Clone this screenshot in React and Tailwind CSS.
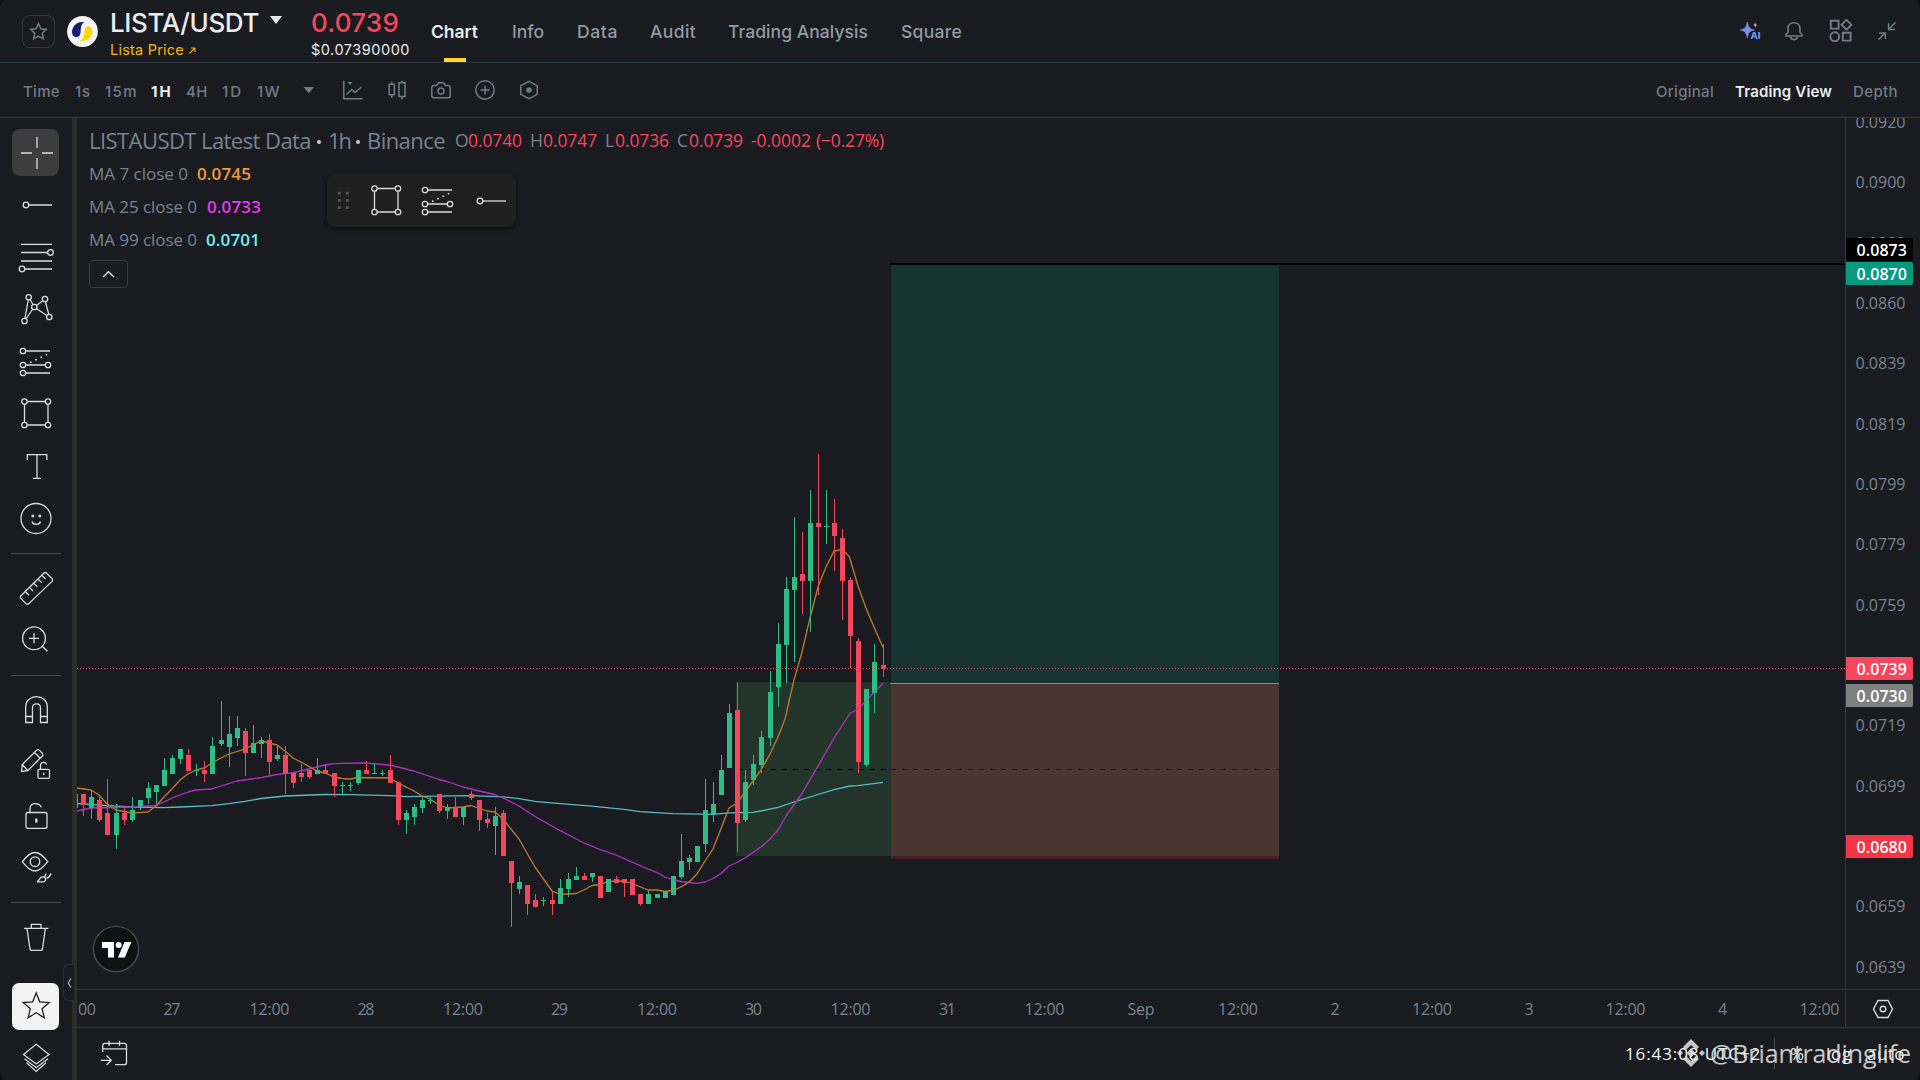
import React, { useLayoutEffect, useRef } from "react";

// Spreads a label's letters so that it fills the width given by its class.
function Fit({ className = "", children }) {
  const box = useRef(null);
  const ink = useRef(null);
  useLayoutEffect(() => {
    const el = ink.current;
    el.style.letterSpacing = "0px";
    const n = el.textContent.length;
    const gap = (box.current.clientWidth - el.getBoundingClientRect().width) / n;
    el.style.letterSpacing = gap.toFixed(3) + "px";
  }, [children]);
  return (
    <span ref={box} className={"block shrink-0 whitespace-nowrap " + className}>
      <span ref={ink}>{children}</span>
    </span>
  );
}

// [x, high, low, bodyTop, bodyBottom, rising]
const CANDLES = [
  [75,794,808,794,808,1],[83,794,816,794,805,0],[91,791,819,797,808,1],[99,797,822,800,820,0],
  [107,779,835,813,835,0],[116,804,849,813,835,1],[124,807,825,813,820,0],[132,797,822,810,820,1],
  [140,800,810,800,808,1],[148,782,804,788,798,1],[156,785,804,785,792,1],[164,758,786,770,786,1],
  [172,755,774,758,774,1],[180,749,764,749,759,1],[188,749,771,755,771,0],[196,764,776,770,771,1],
  [204,761,782,770,774,0],[212,737,774,746,774,1],[221,701,746,740,744,1],[229,716,767,734,747,1],
  [237,716,746,728,738,1],[245,728,776,731,753,0],[253,725,753,743,753,1],[261,737,758,740,744,1],
  [269,734,776,740,762,0],[277,746,761,755,759,1],[285,746,794,755,774,0],[293,773,788,773,783,0],
  [301,764,782,773,777,0],[309,770,779,770,777,0],[317,758,774,770,774,1],[325,764,774,770,774,0],
  [334,773,797,773,786,0],[342,782,794,785,786,1],[350,782,791,785,786,1],[358,770,785,770,783,1],
  [366,761,774,770,774,0],[374,764,774,773,774,1],[382,770,776,773,774,1],[390,755,783,770,783,0],
  [398,782,825,782,820,0],[406,810,834,813,820,1],[414,804,825,807,817,1],[422,797,813,800,808,1],
  [430,797,804,800,801,1],[439,794,813,794,811,0],[447,804,819,807,811,1],[455,797,817,807,817,0],
  [463,807,825,807,817,1],[471,791,800,794,798,0],[479,800,831,800,820,0],[487,813,828,819,823,0],
  [495,807,855,816,826,1],[503,810,856,813,856,0],[511,861,927,861,883,0],[519,876,894,882,889,1],
  [527,885,915,885,904,0],[535,894,907,900,907,0],[543,897,906,900,901,1],[552,891,915,900,904,0],
  [560,879,904,888,904,1],[568,873,897,879,889,1],[576,867,880,876,880,1],[584,873,880,876,880,0],
  [592,873,882,873,877,1],[600,876,898,876,898,0],[608,879,892,879,892,1],[616,876,883,879,883,0],
  [624,879,897,879,883,0],[632,879,895,879,895,0],[640,894,906,894,904,0],[648,891,904,894,904,1],
  [657,894,898,894,898,1],[665,891,898,891,898,1],[673,876,895,876,895,1],[681,834,879,861,877,1],
  [689,855,870,858,862,1],[697,846,862,846,862,1],[705,779,852,810,844,1],[713,782,822,804,814,1],
  [721,755,795,770,795,1],[729,704,768,713,768,1],[737,683,852,710,823,0],[745,770,822,782,820,1],
  [753,755,785,764,780,1],[761,731,773,737,765,1],[770,671,746,692,738,1],[778,623,707,644,687,1],
  [786,577,683,589,645,1],[794,517,662,577,590,1],[802,532,614,574,581,0],[810,490,632,523,581,1],
  [818,454,595,523,527,0],[826,490,544,526,527,1],[834,499,571,523,536,0],[842,529,620,538,581,0],
  [850,577,668,580,636,0],[858,638,773,641,762,0],[866,689,767,689,765,1],[874,644,713,662,693,1],
  [883,644,677,665,669,0],
];

const MA7 =
  "77,788 91,790 99,795 107,804 116,810 132,813 148,812 156,806 164,797 172,789 180,780 188,774 196,770 204,768 212,763 221,758 229,754 245,749 261,741 277,745 285,751 293,758 301,762 317,771 325,773 334,777 342,778.5 350,779 358,777.5 390,778 398,783 414,791 422,796 430,799 439,805 447,808 463,807 471,805.5 487,811 495,812 503,819 519,839 535,867 552,891 560,894.5 576,893.5 584,890 592,885.5 600,884.5 608,881.5 624,881 632,883.5 648,890 657,890 665,891.5 673,890.5 681,887 689,882 697,874 705,861 713,849 729,808 737,803 745,792 753,781 761,770 770,754 778,737 785,719 794,680 802,652 810,618 818,587 826,567 834,551 840,550 845,552 849.5,557 858,586 866,608 874,627 883,647.5";
const MA25 =
  "77,811 91,808 132,807 156,805.5 164,802 172,798 180,795 188,792 196,790 212,789 221,786 237,781 261,777.7 277,774.5 293,772.7 309,769 325,765 334,763.7 363,762.8 390,765 414,771 439,779.5 447,781.5 463,787 479,791 495,794.5 503,798 519,806 535,816.5 560,830.5 584,843 600,849.5 616,855 632,862 648,869 657,872.5 665,877 673,879.5 681,881.5 697,883.3 705,882 713,878.5 721,873.5 729,866 737,862.5 745,858 761,847 770,839 778,830 786,816 802,793.5 818,766 834,738 850,713.5 858,709 866,701 874,692 883,683.5";
const MA99 =
  "77,803.5 107,805.7 132,807 164,807.7 180,807 212,805.7 229,803.7 245,801.3 261,798.5 285,796 325,794.5 350,794.7 390,795.7 406,796.7 471,795.7 503,796.8 519,798.7 535,801.3 560,803.7 592,806.2 624,809.4 640,811.7 673,813.7 713,814.3 729,812.8 753,812.4 761,811 778,807.4 794,802 810,797 834,789.7 850,786 858,785.7 883,782.3";

const PRICES = [
  ["0.0920", 122], ["0.0900", 182], ["0.0880", 242.5], ["0.0860", 303], ["0.0839", 363], ["0.0819", 424],
  ["0.0799", 484], ["0.0779", 544], ["0.0759", 605], ["0.0719", 725], ["0.0699", 786], ["0.0659", 906], ["0.0639", 967],
];
const TAGS = [
  ["0.0873", 238, "#000000"], ["0.0870", 262, "#089981"], ["0.0739", 657, "#f6465d"],
  ["0.0730", 684, "#808080"], ["0.0680", 835, "#f23645"],
];
const TIMES = [
  ["27", 172, 17], ["12:00", 269.5, 40], ["28", 366, 17], ["12:00", 463, 40], ["29", 559.5, 17], ["12:00", 657, 40],
  ["30", 753.5, 17], ["12:00", 850.5, 40], ["31", 947.5, 17], ["12:00", 1044.5, 40], ["Sep", 1141, 27], ["12:00", 1238, 40],
  ["2", 1334.5, 8], ["12:00", 1432, 40], ["3", 1528.5, 8], ["12:00", 1625.5, 40], ["4", 1722, 8], ["12:00", 1819.5, 40],
];

const FONT = "font-['Open_Sans','Noto_Sans',sans-serif]";

function Candles() {
  return (
    <g shapeRendering="crispEdges">
      {CANDLES.map(([x, hi, lo, t, b, up]) => (
        <g key={x} fill={up ? "#2ebd85" : "#f6465d"}>
          <rect x={x} y={hi} width="1" height={lo - hi} />
          <rect x={x - 2} y={t} width="5" height={b - t} />
        </g>
      ))}
    </g>
  );
}

function Plot() {
  return (
    <svg className="block shrink-0" width="1768" height="871" viewBox="77 118 1768 871">
      <g shapeRendering="crispEdges">
        <rect x="736" y="682" width="155" height="174" fill="#23352a" />
        <rect x="891" y="264" width="388" height="419" fill="#173332" />
        <rect x="891" y="683" width="388" height="173" fill="#4b362f" />
        <rect x="891" y="856" width="388" height="3" fill="#451d28" />
        <path d="M737 769.5H891" stroke="#000" strokeDasharray="5 6" strokeDashoffset="-1" />
        <path d="M891 769.5H1279" stroke="#2c1213" strokeDasharray="5 6" />
        <path d="M890 683.5H1279" stroke="#8c8c88" />
        <rect x="890" y="263" width="955" height="2" fill="#000" />
      </g>
      <g fill="none" strokeWidth="1.3" strokeLinejoin="round">
        <polyline points={MA99} stroke="#5bbcc3" />
        <polyline points={MA25} stroke="#ae33bd" />
        <polyline points={MA7} stroke="#b3792d" />
      </g>
      <Candles />
      <g fill="none" strokeWidth="1.1" strokeLinejoin="round" opacity="0.35">
        <polyline points={MA25} stroke="#a72fb6" />
        <polyline points={MA7} stroke="#b3792d" />
      </g>
      <path d="M77 668.5H1845" stroke="#f6465d" strokeDasharray="1 2" shapeRendering="crispEdges" />
    </svg>
  );
}

function PriceAxis() {
  return (
    <svg className={"block " + FONT} width="74" height="871" viewBox="1846 118 74 871" fontSize="16">
      {PRICES.map(([t, y]) => (
        <text key={t} x="1855.5" y={y + 6} fill="#7a8292" textLength="50">{t}</text>
      ))}
      {TAGS.map(([t, y, c]) => (
        <g key={t}>
          <path d={`M1846 ${y}h65a2 2 0 0 1 2 2v19a2 2 0 0 1 -2 2h-65z`} fill={c} />
          <text x="1856.5" y={y + 17.7} fill="#fff" fontWeight="600" textLength="50.5">{t}</text>
        </g>
      ))}
    </svg>
  );
}

function TimeAxis() {
  return (
    <svg className={"block shrink-0 " + FONT} width="1768" height="37" viewBox="77 990 1768 37" fontSize="16" fill="#7a8292">
      <text x="78" y="1015" textLength="18">00</text>
      {TIMES.map(([t, x, w]) => (
        <text key={x} x={x - w / 2} y="1015" textLength={w}>{t}</text>
      ))}
    </svg>
  );
}

// One slot of the drawing rail; y and h are the slot's vertical extent.
function Slot({ y, h, children }) {
  return (
    <svg className="block shrink-0" width="72" height={h} viewBox={`0 ${y} 72 ${h}`} fill="none" stroke="#dbdbdb" strokeWidth="1.3">
      {children}
    </svg>
  );
}

function ChannelGlyph() {
  return (
    <g>
      <circle cx="3" cy="3" r="2.7" /><path d="M6 3H30M6 17H25M6 25H30" />
      <circle cx="3" cy="17" r="2.7" /><circle cx="28" cy="17" r="2.7" /><circle cx="3" cy="25" r="2.7" />
      <path d="M10 14.5L28 6" strokeDasharray="1.6 4.2" strokeWidth="1.6" />
    </g>
  );
}
function RectGlyph() {
  return (
    <g>
      <path d="M6 3H23.5M6 26.5H23.5M3 6V23.5M26.5 6V23.5" />
      <circle cx="3" cy="3" r="2.7" /><circle cx="26.5" cy="3" r="2.7" /><circle cx="3" cy="26.5" r="2.7" /><circle cx="26.5" cy="26.5" r="2.7" />
    </g>
  );
}

function Rail() {
  return (
    <aside className="relative flex w-[72px] shrink-0 flex-col">
      <Slot y={118} h={68}>
        <rect x="12" y="129" width="47" height="47" rx="8" fill="#3d3d3d" stroke="none" />
        <path d="M37 137V148M37 158V169M21 153H32M42 153H53" />
      </Slot>
      <Slot y={186} h={38}><circle cx="26" cy="205" r="2.8" /><path d="M29 205H52" /></Slot>
      <Slot y={224} h={60}>
        <path d="M21 244.3H52M21 252.5H47.5M21 261H52M25 269H52" />
        <circle cx="50.5" cy="252.5" r="2.8" /><circle cx="22" cy="269" r="2.8" />
      </Slot>
      <Slot y={284} h={50}>
        <path d="M28.2 300L25 318M30 299.5L33 304.5M26.3 318.5L32.5 309.5M36.8 305.3L42.5 301M45.5 302L48.7 314M36.8 308.8L46.7 315.5" />
        <circle cx="28.7" cy="297.3" r="2.7" /><circle cx="45" cy="299" r="2.7" /><circle cx="34.3" cy="307" r="2.7" /><circle cx="24.5" cy="321" r="2.7" /><circle cx="49.3" cy="317" r="2.7" />
      </Slot>
      <Slot y={334} h={54}><g transform="translate(20 348)"><ChannelGlyph /></g></Slot>
      <Slot y={388} h={52}><g transform="translate(21.5 398.5)"><RectGlyph /></g></Slot>
      <Slot y={440} h={52}><path d="M27.3 460V454.7H46.8V460M37 454.7V478.3M33 478.3H41" /></Slot>
      <Slot y={492} h={53}>
        <circle cx="36" cy="518.5" r="15" />
        <path d="M32 521.5C33 525.2 39.5 525.2 40.5 521.5" />
        <path d="M32.8 514.7v2.6M39.8 514.7v2.6" strokeWidth="2.6" />
      </Slot>
      <div className="ml-[11px] mt-2 mb-[7px] h-px w-[50px] shrink-0 bg-[#4a4a4c]" />
      <Slot y={561} h={51}>
        <path d="M43.8 573.2Q45.2 571.8 46.6 573.2L52 578.6Q53.4 580 52 581.4L28.8 603.6Q27.4 605 26 603.6L21 598.6Q19.6 597.2 21 595.8Z" />
        <path d="M25.5 591.8L29 595.3M29.7 587.6L33 591M34 583.4L37.4 586.8M38.2 579.2L41.6 582.6M42 575.4L45.4 578.8" />
      </Slot>
      <Slot y={612} h={63}>
        <circle cx="34" cy="638.3" r="11.4" /><path d="M42.3 646.3L47.3 651.3M29 638.3H39M34 633.3V643.3" />
      </Slot>
      <div className="ml-[11px] mb-[9px] h-px w-[50px] shrink-0 bg-[#4a4a4c]" />
      <Slot y={685} h={50}>
        <path d="M25.7 722.5V707.5C25.7 693 47.3 693 47.3 707.5V722.5H40.5V708C40.5 702.5 32.5 702.5 32.5 708V722.5ZM25.7 716.5H32.5M40.5 716.5H47.3" />
      </Slot>
      <Slot y={735} h={55}>
        <path d="M21.5 771.5L22.3 764.5L36.6 750.3Q38 749 39.5 750.4L42.3 753.2Q43.5 754.7 42.3 756L27.7 770.7ZM22.5 764.7L27.7 770.5M34.5 752.5L40.2 758.2" />
        <rect x="38" y="769.3" width="11.5" height="9" rx="1.2" /><path d="M40.5 769V765.5C40.5 761.5 46 761.5 46.5 764.5M43.8 772.8v2.2" />
      </Slot>
      <Slot y={790} h={52}>
        <rect x="26" y="812.5" width="21" height="15.8" rx="2" /><path d="M30 812V808.5C30 802 39.5 802.3 41.3 807.3" />
        <path d="M36.3 818.6v4" strokeWidth="2.4" />
      </Slot>
      <Slot y={842} h={51}>
        <path d="M22.3 861.7C27 855.5 30.5 852.5 35 852.5S43 855.5 47.7 861.7C43 868 39.5 871 35 871S27 868 22.3 861.7Z" /><circle cx="35" cy="861.7" r="4.8" />
        <path d="M37 881.8H43.5C46.5 881.6 46.3 877 43 876.8C39 876.5 40.5 880 37 881.8ZM44.7 877L46 873.5M46.5 878.3C49 877.5 50.3 876 51 873.5" />
      </Slot>
      <div className="ml-[11px] mt-[9px] mb-2 h-px w-[50px] shrink-0 bg-[#4a4a4c]" />
      <Slot y={911} h={54}><path d="M24 928.4H48.3M31.3 928V924.3H41V928M27 928.5L30 949Q30.3 950.4 31.5 950.4H41Q42.2 950.4 42.5 949L45.3 928.5" /></Slot>
      <Slot y={965} h={72}>
        <rect x="12" y="983" width="47" height="47" rx="7" fill="#f3f3f3" stroke="none" />
        <path d="M36.2 993L39.8 1001.8L49.2 1002.6L42.1 1008.8L44.3 1017.8L36.2 1012.8L28.1 1017.8L30.3 1008.8L23.2 1002.6L32.6 1001.8Z" stroke="#1f1f1f" />
      </Slot>
      <Slot y={1037} h={43}><path d="M36.2 1044.3L49 1054.5L36.2 1064L23.5 1054.5ZM24.5 1058.8L36.2 1067.8L48 1058.8M26.5 1062.7L36.2 1071.5L46 1062.7" strokeWidth="1.25" /></Slot>
      <div className="absolute left-[63px] top-[846px] z-10 flex h-[37px] w-[11px] items-center justify-center rounded-l-md border border-r-0 border-[#2e2e30] bg-[#1a1b20]">
        <svg width="5" height="10" viewBox="0 0 5 10" fill="none" stroke="#b5b5b5" strokeWidth="1.2"><path d="M4 .5L1.2 5L4 9.5" /></svg>
      </div>
    </aside>
  );
}

function Header() {
  return (
    <header className="flex h-[63px] shrink-0 border-b border-[#333b47] font-['Inter',sans-serif]">
      <div className="ml-[22px] mt-[15px] flex h-[33px] w-[33px] items-center justify-center rounded-lg border border-[#333b47]">
        <svg width="19" height="19" viewBox="0 0 19 19" fill="none" stroke="#727a89" strokeWidth="1.5"><path d="M9.5 1.6L11.9 6.7L17.3 7.4L13.3 11.2L14.3 16.8L9.5 14.1L4.7 16.8L5.7 11.2L1.7 7.4L7.1 6.7Z" /></svg>
      </div>
      <svg className="ml-3 mt-4" width="31" height="31" viewBox="0 0 31 31">
        <circle cx="15.5" cy="15.5" r="15.4" fill="#f4f4f4" />
        <path d="M17.3 6.3C11 4.5 5 10 5 16C5 19.5 7.5 21.8 10.5 21C13.5 20 13.6 17 13.7 14C13.8 10.5 14.5 7.5 17.3 6.3Z" fill="#1b1f74" />
        <path d="M12.8 24.7C19 26.5 25.5 21.5 25.5 15.5C25.5 12 23.4 9.9 20.5 10.7C17.5 11.7 17.3 14.5 17.2 17C17.1 20.5 15.5 23.5 12.8 24.7Z" fill="#ffd60a" />
      </svg>
      <div className="ml-3 w-[201px]">
        <div className="mt-[7px] flex h-8 items-center">
          <Fit className="w-[149px] text-[26px] font-medium leading-8 text-[#eaecef]">LISTA/USDT</Fit>
          <svg className="ml-[11px] -mt-[7px]" width="12" height="8" viewBox="0 0 12 8"><path d="M0 0H12L6 8Z" fill="#eaecef" /></svg>
        </div>
        <div className="mt-px flex h-5 items-center">
          <Fit className="w-[74px] text-[14.5px] leading-5 text-[#f0b90b]">Lista Price</Fit>
          <svg className="ml-[5px]" width="7" height="7" viewBox="0 0 7 7" fill="none" stroke="#f0b90b" strokeWidth="1.1"><path d="M.5 6.5L5.8 1.2M2 1H6V5" /></svg>
        </div>
      </div>
      <div className="w-[120px]">
        <Fit className="mt-[7px] w-[88px] text-[26px] font-medium leading-8 text-[#f6465d]">0.0739</Fit>
        <Fit className="mt-px w-[99px] text-[14.5px] leading-5 text-[#eaecef]">$0.07390000</Fit>
      </div>
      <nav className="flex text-[17.5px] font-medium leading-[64px] text-[#929aa5]">
        <div className="flex flex-col items-center">
          <Fit className="h-[58px] w-[47px] font-semibold text-[#eaecef]">Chart</Fit>
          <div className="h-1 w-[22px] bg-[#fcd535]" />
        </div>
        <Fit className="ml-[34px] w-[32px]">Info</Fit>
        <Fit className="ml-[33px] w-[41px]">Data</Fit>
        <Fit className="ml-[32px] w-[46px]">Audit</Fit>
        <Fit className="ml-[32px] w-[140px]">Trading Analysis</Fit>
        <Fit className="ml-[33px] w-[61px]">Square</Fit>
      </nav>
      <svg className="ml-auto mr-[22px] mt-[17px]" width="158" height="28" viewBox="1740 17 158 28" fill="none" stroke="#727a89" strokeWidth="1.7">
        <path d="M1747.3 22C1748.5 27.5 1749.5 29 1754.5 30C1749.5 31 1748.5 32.5 1747.3 38C1746.1 32.5 1745.1 31 1740.3 30C1745.1 29 1746.1 27.5 1747.3 22Z" fill="#7393f2" stroke="#7393f2" strokeWidth=".6" />
        <path d="M1755.2 22C1755.5 24 1756 24.6 1757.7 25C1756 25.4 1755.5 26 1755.2 28C1754.9 26 1754.4 25.4 1752.7 25C1754.4 24.6 1754.9 24 1755.2 22Z" fill="#c98fae" stroke="none" />
        <text x="1750.5" y="39.3" fontSize="9.5" fontWeight="800" fill="#7393f2" stroke="none">AI</text>
        <path d="M1786 36V34.5L1788 32.5V28.5C1788 20.8 1800 20.8 1800 28.5V32.5L1802 34.5V36ZM1790.5 37C1791.5 40.5 1796.5 40.5 1797.5 37" strokeWidth="1.6" />
        <path d="M1830.8 20.8h7.8v7.8h-7.8zM1842.8 32.8h7.8v7.8h-7.8zM1846.5 19.8L1851.4 24.7L1846.5 29.6L1841.6 24.7Z" strokeWidth="1.9" /><circle cx="1834.7" cy="36.7" r="4.4" strokeWidth="1.9" />
        <path d="M1895.7 22.3L1889 29M1888.6 23.3V29.4H1894.8M1878.3 39.7L1885 33M1879.2 33H1885.4V39.2" strokeWidth="1.5" />
      </svg>
    </header>
  );
}

function Toolbar() {
  return (
    <div className="flex h-[55px] shrink-0 border-b border-[#333b47] font-['Inter',sans-serif] text-[15px] font-medium leading-[58px] text-[#727a89]">
      <Fit className="ml-[23px] w-[37px]">Time</Fit>
      <Fit className="ml-[15px] w-4">1s</Fit>
      <Fit className="ml-[14px] w-[33px]">15m</Fit>
      <Fit className="ml-[13px] w-[22px] font-bold text-[#eaecef]">1H</Fit>
      <Fit className="ml-[13px] w-[22px]">4H</Fit>
      <Fit className="ml-[14px] w-[21px]">1D</Fit>
      <Fit className="ml-[14px] w-[24px]">1W</Fit>
      <svg className="mt-[14px] ml-[21px]" width="240" height="26" viewBox="302 77 240 26" fill="none" stroke="#727a89" strokeWidth="1.5">
        <path d="M303.5 87H314L308.8 93.3Z" fill="#727a89" stroke="none" />
        <path d="M343.8 80.7V98.7H362.5M346.5 94.5L351.7 89.5L355 92.5L361.5 87" /><path d="M347.3 82H352.5L350 85Z" fill="#727a89" stroke="none" />
        <path d="M391.8 81.5V84M391.8 95V98M389.2 84.3h5.2v10.5h-5.2zM402 80.7V82.5M402 96.7V99.5M399 82.8h6v13.7h-6z" />
        <path d="M434 85.5H436.5L438.5 82.7H443.5L445.5 85.5H448Q450.2 85.5 450.2 87.7V95.5Q450.2 97.7 448 97.7H434Q431.8 97.7 431.8 95.5V87.7Q431.8 85.5 434 85.5Z" /><circle cx="441" cy="91" r="3" />
        <circle cx="485" cy="90" r="9.2" /><path d="M485 85.5V94.5M480.5 90H489.5" />
        <path d="M529 81.3L537.2 85.7V94.3L529 98.7L520.8 94.3V85.7Z" /><circle cx="529" cy="90" r="2.8" fill="#727a89" stroke="none" />
      </svg>
      <Fit className="ml-auto w-[58px]">Original</Fit>
      <Fit className="ml-[21px] w-[97px] font-semibold text-[#eaecef]">Trading View</Fit>
      <Fit className="ml-[21px] mr-[22px] w-[45px]">Depth</Fit>
    </div>
  );
}

const OHLC = [
  ["ml-[10px] w-[13px]", "O", "w-[54px]", "0.0740"],
  ["ml-[8px] w-[13px]", "H", "w-[54px]", "0.0747"],
  ["ml-[8px] w-[10px]", "L", "w-[54px]", "0.0736"],
  ["ml-[8px] w-[12px]", "C", "w-[54px]", "0.0739"],
];
const AVERAGES = [
  ["MA 7 close 0", "w-[99px]", "ml-[9px]", "0.0745", "text-[#f09d37]"],
  ["MA 25 close 0", "w-[108px]", "ml-[10px]", "0.0733", "text-[#e73bf2]"],
  ["MA 99 close 0", "w-[108px]", "ml-[9px]", "0.0701", "text-[#6ff0ee]"],
];

function Legend() {
  return (
    <div className="absolute left-[12px] top-[6px] text-[#7a8292]">
      <div className="flex h-8 items-center text-[17.5px] leading-8">
        <Fit className="w-[222px] text-[22px]">LISTAUSDT Latest Data</Fit>
        <span className="ml-[6px] mr-[7px] mt-1 h-1 w-1 rounded-full bg-[#c9ccd2]" />
        <Fit className="w-[22px] text-[22px]">1h</Fit>
        <span className="ml-[6px] mr-[7px] mt-1 h-1 w-1 rounded-full bg-[#c9ccd2]" />
        <Fit className="w-[78px] text-[22px]">Binance</Fit>
        {OHLC.map(([a, k, b, v]) => (
          <React.Fragment key={k}>
            <Fit className={a}>{k}</Fit>
            <Fit className={b + " font-medium text-[#f6465d]"}>{v}</Fit>
          </React.Fragment>
        ))}
        <Fit className="ml-[8px] w-[60px] font-medium text-[#f6465d]">-0.0002</Fit>
        <Fit className="ml-[5px] w-[68px] font-medium text-[#f6465d]">(−0.27%)</Fit>
      </div>
      <div className="mt-px">
        {AVERAGES.map(([name, w, gap, v, c]) => (
          <div key={name} className="flex h-[33px] items-center text-[17px] leading-[33px]">
            <Fit className={w}>{name}</Fit>
            <Fit className={gap + " w-[54px] font-semibold " + c}>{v}</Fit>
          </div>
        ))}
      </div>
      <div className="mt-[4px] flex h-7 w-[39px] items-center justify-center rounded border border-[#3a3b40]">
        <svg width="13" height="8" viewBox="0 0 13 8" fill="none" stroke="#dbdbdb" strokeWidth="1.5"><path d="M1 7L6.5 1.8L12 7" /></svg>
      </div>
    </div>
  );
}

function Favorites() {
  return (
    <div className="absolute left-[250px] top-[56px] h-[53px] w-[189px] rounded-lg bg-[#1f1f1f] shadow-[0_2px_4px_rgba(0,0,0,0.5)]">
      <svg className="block" width="189" height="53" viewBox="327 174 189 53" fill="none" stroke="#dbdbdb" strokeWidth="1.3">
        <g fill="#5c5c5c" stroke="none">
          {[193, 200.3, 207.5].map((y) => (
            <g key={y}><rect x="338" y={y - 1.2} width="2.6" height="2.6" /><rect x="346" y={y - 1.2} width="2.6" height="2.6" /></g>
          ))}
        </g>
        <g transform="translate(371.5 185.5)"><RectGlyph /></g>
        <g transform="translate(422 187)"><ChannelGlyph /></g>
        <circle cx="480" cy="201" r="2.8" /><path d="M483 201H506" />
      </svg>
    </div>
  );
}

function Footer() {
  return (
    <div className="relative flex h-[52px] shrink-0 items-center text-[#f4f4f4]">
      <svg className="ml-[23px] -mt-[2px]" width="30" height="30" viewBox="100 1038 30 30" fill="none" stroke="#dbdbdb" strokeWidth="1.3">
        <path d="M102.7 1052V1045.5Q102.7 1043.3 104.9 1043.3H124.3Q126.5 1043.3 126.5 1045.5V1062.5Q126.5 1064.7 124.3 1064.7H115M102.7 1048.8H126.5M109 1040.7V1046M119.5 1040.7V1046M100.7 1060.3H111M106.5 1055.5L111.3 1060.3L106.5 1065" />
      </svg>
      <div className="ml-auto mr-[15px] flex items-center text-[17px] font-medium leading-[52px]">
        <Fit className="w-[136px]">16:43:08 UTC+2</Fit>
        <span className="ml-[13px] h-[30px] w-px bg-[#4a4a4c]" />
        <Fit className="ml-[15px] w-[18px]">%</Fit>
        <Fit className="ml-[18px] w-[26px]">log</Fit>
        <Fit className="ml-[15px] w-[38px]">auto</Fit>
      </div>
      <div className="absolute -top-px right-[9px] flex h-[52px] items-center text-[#e4e4e4] opacity-85">
        <svg width="28" height="28" viewBox="0 0 28 28" fill="currentColor">
          <path d="M14 0L22 8L19 11L14 6L9 11L6 8ZM3 11L6 14L3 17L0 14ZM25 11L28 14L25 17L22 14ZM14 9.5L18.5 14L14 18.5L9.5 14ZM9 17L14 22L19 17L22 20L14 28L6 20Z" />
        </svg>
        <Fit className="ml-[5px] w-[201px] text-[25px] leading-[48px]">@Briantradinglife</Fit>
      </div>
    </div>
  );
}

export default function App() {
  return (
    <div className="h-[1080px] w-[1920px] overflow-hidden bg-[#101011]">
      <div className="flex h-full w-full flex-col overflow-hidden rounded-lg bg-[#1a1b20]">
        <Header />
        <Toolbar />
        <div className="flex min-h-0 flex-1">
          <Rail />
          <div className="w-[5px] shrink-0 bg-[#2c2c29]" />
          <main className={"flex min-w-0 flex-1 flex-col " + FONT}>
            <div className="relative flex h-[872px] shrink-0 border-b border-[#34363e]">
              <Plot />
              <div className="border-l border-[#34363e]"><PriceAxis /></div>
              <Legend />
              <Favorites />
              <svg className="absolute left-[15px] top-[807px]" width="48" height="48" viewBox="0 0 48 48">
                <circle cx="24" cy="24" r="22.6" fill="#101113" stroke="#4a4a4c" strokeWidth="1.4" />
                <path d="M10 17H22V32.5H16V23H10ZM32.5 17H39.3L32.8 32.5H26Z" fill="#fff" /><circle cx="26.6" cy="20" r="3" fill="#fff" />
              </svg>
            </div>
            <div className="flex h-[38px] shrink-0 border-b border-[#34363e]">
              <TimeAxis />
              <div className="flex flex-1 items-center justify-center border-l border-[#34363e]">
                <svg width="22" height="20" viewBox="0 0 22 20" fill="none" stroke="#dbdbdb" strokeWidth="1.4"><path d="M6 1.5H16L20.5 10L16 18.5H6L1.5 10Z" /><circle cx="11" cy="10" r="2.8" /></svg>
              </div>
            </div>
            <Footer />
          </main>
        </div>
      </div>
    </div>
  );
}
